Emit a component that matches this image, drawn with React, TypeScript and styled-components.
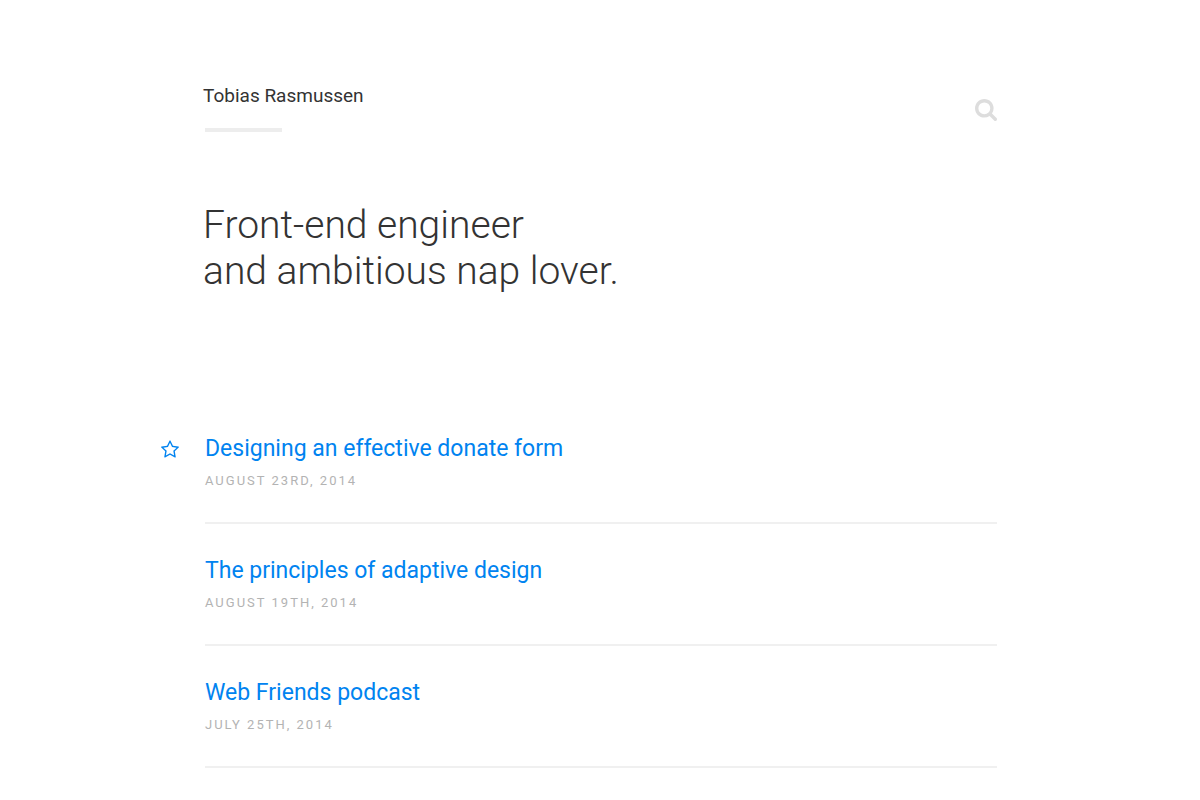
import React from "react";
import styled, { createGlobalStyle } from "styled-components";

const GlobalStyle = createGlobalStyle`
  * { box-sizing: border-box; }
  body {
    margin: 0;
    background: #fff;
    color: #333;
    font-family: Roboto, "Liberation Sans", sans-serif;
  }
`;

const Page = styled.div`
  max-width: 794px;
  margin: 0 auto;
  padding-top: 84px;
`;

const Header = styled.header`
  display: flex;
  justify-content: space-between;
  align-items: flex-start;
`;

const SiteName = styled.a`
  display: block;
  color: #333;
  text-decoration: none;
  font-size: 19px;
  line-height: 24px;
  &::after {
    content: "";
    display: block;
    width: 77px;
    height: 4px;
    margin: 20px 0 0 2px;
    background: #ededed;
  }
`;

const SearchButton = styled.button`
  display: flex;
  margin-top: 15px;
  padding: 0;
  border: 0;
  background: none;
  color: #ddd;
  cursor: pointer;
`;

const Tagline = styled.h1`
  margin: 70px 0 0;
  font-size: 39px;
  line-height: 46px;
  font-weight: 300;
`;

const Posts = styled.ul`
  list-style: none;
  margin: 108px 0 0 2px;
  padding: 0;
`;

const Post = styled.li`
  position: relative;
  padding: 29px 0;
  border-bottom: 2px solid #f0f0f0;
`;

const StarIcon = styled.svg`
  position: absolute;
  right: calc(100% + 26px);
  top: 38px;
  fill: #0083f0;
`;

const PostTitle = styled.a`
  display: block;
  color: #0083f0;
  text-decoration: none;
  font-size: 23px;
  line-height: 36px;
`;

const PostDate = styled.time`
  display: block;
  margin-top: 2px;
  color: #b3b3b3;
  font-size: 13px;
  line-height: 24px;
  letter-spacing: 2px;
  text-transform: uppercase;
`;

const Search = () => (
  <svg width="22" height="22" viewBox="64 128 1664 1664" fill="currentColor" aria-hidden="true">
    <path d="M1216 832q0-185-131.5-316.5t-316.5-131.5-316.5 131.5-131.5 316.5 131.5 316.5 316.5 131.5 316.5-131.5 131.5-316.5zm512 832q0 52-38 90t-90 38q-54 0-90-38l-343-342q-179 124-399 124-143 0-273.5-55.5t-225-150-150-225-55.5-273.5 55.5-273.5 150-225 225-150 273.5-55.5 273.5 55.5 225 150 150 225 55.5 273.5q0 220-124 399l343 343q37 37 37 90z" />
  </svg>
);

const Star = () => (
  <StarIcon width="18" height="18" viewBox="64 0 1664 1664" role="img" aria-label="Starred">
    <path d="M1201 1004l306-297-422-62-189-382-189 382-422 62 306 297-73 421 378-199 377 199zm527-357q0 22-26 48l-363 354 86 500q1 7 1 20 0 50-41 50-19 0-40-12l-449-236-449 236q-22 12-40 12-21 0-31.5-14.5t-10.5-35.5q0-6 2-20l86-500-364-354q-25-27-25-48 0-37 56-46l502-73 225-455q19-41 49-41t49 41l225 455 502 73q56 9 56 46z" />
  </StarIcon>
);

const posts = [
  { title: "Designing an effective donate form", date: "August 23rd, 2014", iso: "2014-08-23", starred: true },
  { title: "The principles of adaptive design", date: "August 19th, 2014", iso: "2014-08-19", starred: false },
  { title: "Web Friends podcast", date: "July 25th, 2014", iso: "2014-07-25", starred: false },
];

export default function App() {
  return (
    <Page>
      <GlobalStyle />
      <Header>
        <SiteName href="#">Tobias Rasmussen</SiteName>
        <SearchButton type="button" aria-label="Search">
          <Search />
        </SearchButton>
      </Header>
      <main>
        <Tagline>
          Front-end engineer
          <br />
          and ambitious nap lover.
        </Tagline>
        <Posts>
          {posts.map((p) => (
            <Post key={p.iso}>
              {p.starred && <Star />}
              <PostTitle href="#">{p.title}</PostTitle>
              <PostDate dateTime={p.iso}>{p.date}</PostDate>
            </Post>
          ))}
        </Posts>
      </main>
    </Page>
  );
}
